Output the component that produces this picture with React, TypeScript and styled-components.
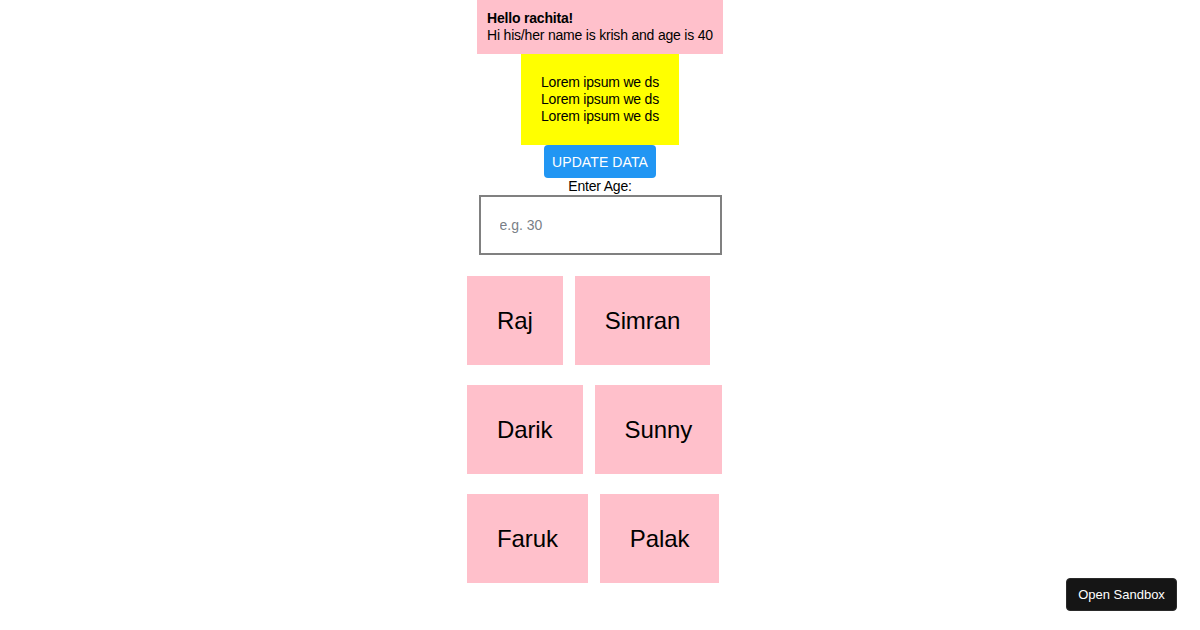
import React, { useState } from 'react';
import styled, { createGlobalStyle } from 'styled-components';

const GlobalStyle = createGlobalStyle`
  html, body {
    margin: 0;
    padding: 0;
    background: #ffffff;
    font-family: "Liberation Sans", Arial, sans-serif;
    color: #000000;
  }
`;

const Page = styled.div`
  display: flex;
  flex-direction: column;
  align-items: center;
  font-size: 14px;
  line-height: 17px;
  letter-spacing: -0.2px;
`;

const Greeting = styled.div`
  background: #ffc0cb;
  padding: 10px;

  strong {
    display: block;
    font-weight: bold;
  }
`;

const Notes = styled.div`
  background: #ffff00;
  padding: 20px;
  text-align: center;
`;

const UpdateButton = styled.button`
  background: #2196f3;
  color: #ffffff;
  border: none;
  border-radius: 4px;
  height: 33px;
  padding: 0 8px;
  font-family: "Liberation Sans", Arial, sans-serif;
  font-size: 14px;
  letter-spacing: 0.1px;
  cursor: pointer;
`;

const Label = styled.label`
  text-align: center;
`;

const AgeInput = styled.input`
  box-sizing: border-box;
  width: 243px;
  height: 60px;
  border: 2px solid #808080;
  padding: 0 19px;
  font-family: "Liberation Sans", Arial, sans-serif;
  font-size: 14px;
  outline: none;

  &::placeholder {
    color: #7a7f87;
  }
`;

const Cards = styled.div`
  width: 266px;
  margin-top: 21px;
  display: flex;
  flex-direction: column;
  gap: 20px;
`;

const CardRow = styled.div`
  display: flex;
  gap: 12px;
`;

const Card = styled.div`
  background: #ffc0cb;
  padding: 30px;
  font-size: 24px;
  line-height: 29px;
  letter-spacing: -0.1px;
`;

const SandboxButton = styled.button`
  position: fixed;
  right: 23px;
  bottom: 19px;
  width: 111px;
  height: 33px;
  background: #151515;
  color: #ffffff;
  border: 1px solid #2a2a2a;
  border-radius: 4px;
  font-family: "Liberation Sans", Arial, sans-serif;
  font-size: 13px;
  cursor: pointer;
`;

const rows = [
  ['Raj', 'Simran'],
  ['Darik', 'Sunny'],
  ['Faruk', 'Palak'],
];

export default function App() {
  const [age, setAge] = useState('');

  return (
    <>
      <GlobalStyle />
      <Page>
        <Greeting>
          <strong>Hello rachita!</strong>
          Hi his/her name is krish and age is 40
        </Greeting>
        <Notes>
          <div>Lorem ipsum we ds</div>
          <div>Lorem ipsum we ds</div>
          <div>Lorem ipsum we ds</div>
        </Notes>
        <UpdateButton>UPDATE DATA</UpdateButton>
        <Label htmlFor='age'>Enter Age:</Label>
        <AgeInput
          id='age'
          placeholder='e.g. 30'
          value={age}
          onChange={(e) => setAge(e.target.value)}
        />
        <Cards>
          {rows.map((row) => (
            <CardRow key={row[0]}>
              {row.map((name) => (
                <Card key={name}>{name}</Card>
              ))}
            </CardRow>
          ))}
        </Cards>
      </Page>
      <SandboxButton>Open Sandbox</SandboxButton>
    </>
  );
}
